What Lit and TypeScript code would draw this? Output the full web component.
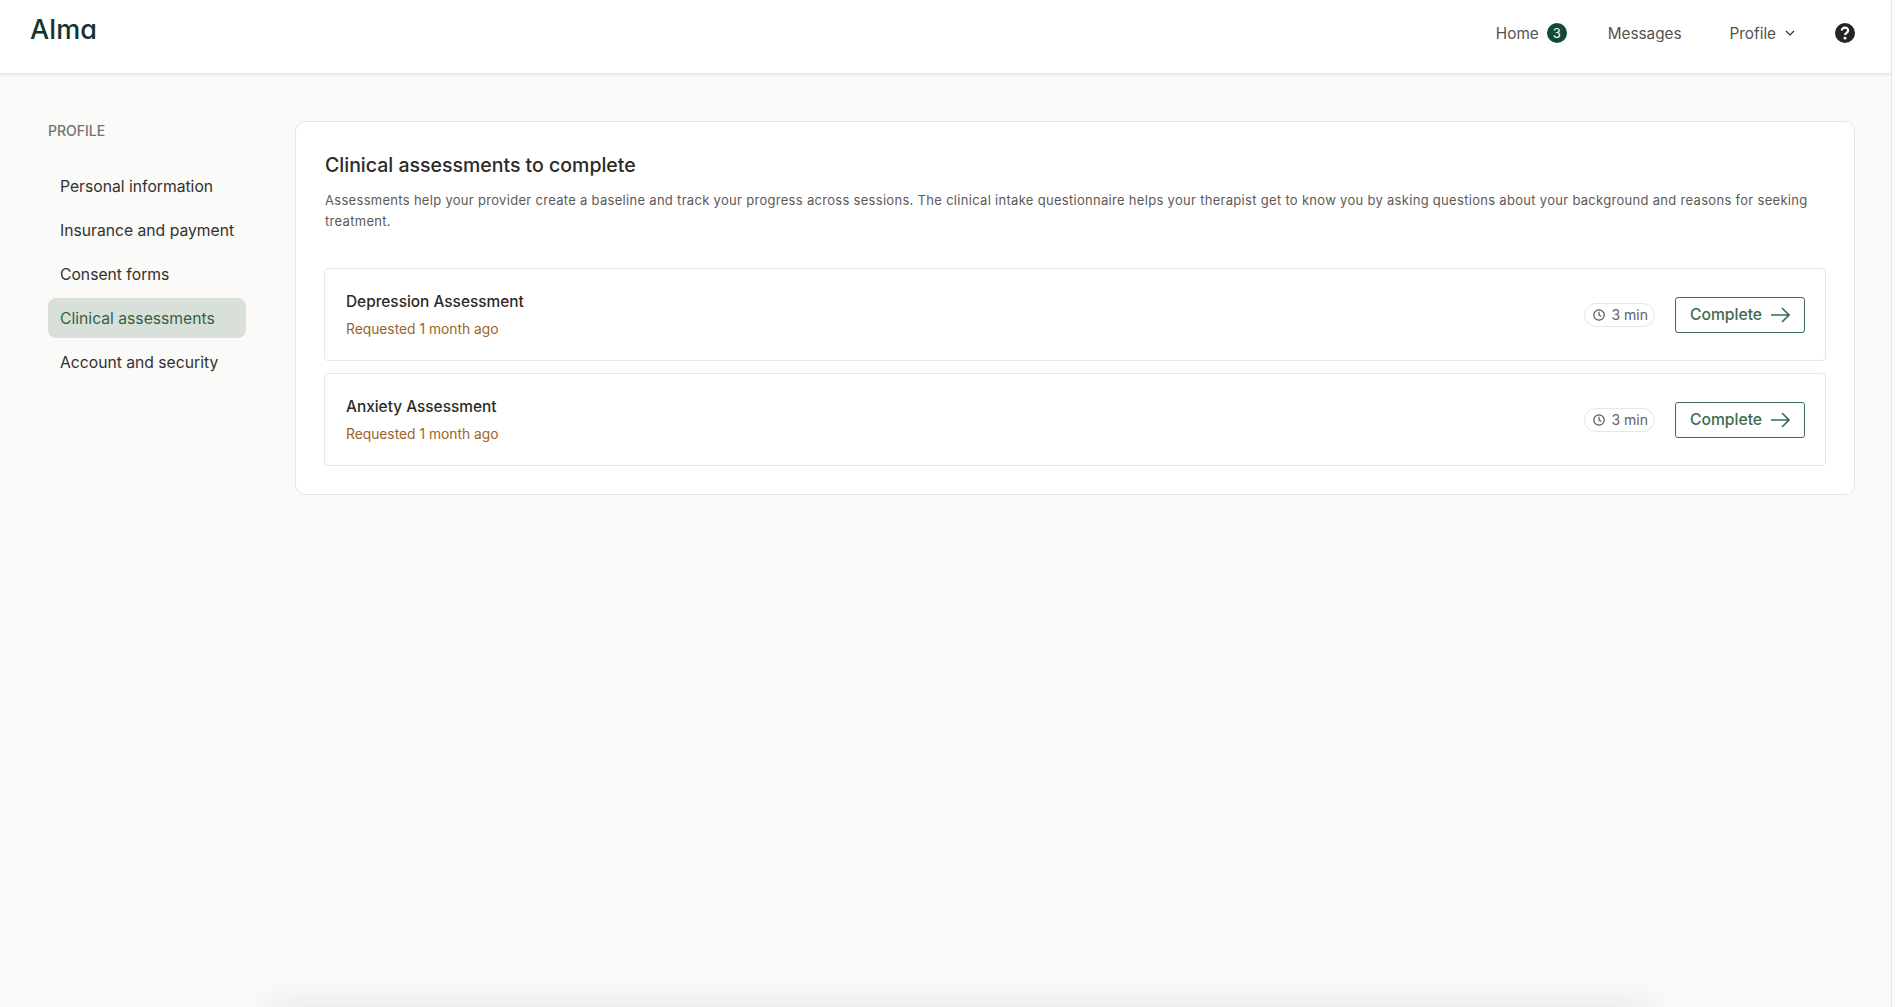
import { LitElement, html, css } from "lit";
import { customElement } from "lit/decorators.js";

const items = ["Personal information", "Insurance and payment", "Consent forms", "Clinical assessments", "Account and security"];
const rows = ["Depression Assessment", "Anxiety Assessment"];

@customElement("app-root")
export class AppRoot extends LitElement {
  static styles = css`
    :host { display: flex; height: 100vh; overflow: hidden; position: relative; font-family: Inter, "Liberation Sans", sans-serif; background: #fafaf8; color: #2b2a29; }
    * { box-sizing: border-box; }
    .page { flex: 1; min-width: 0; display: flex; flex-direction: column; }
    .track { width: 4px; border-left: 1px solid #e6e6e3; background: #fafaf8; }
    header { height: 73px; flex: none; background: #fff; box-shadow: 0 1px 4px rgba(0,0,0,.14); display: flex; align-items: center; justify-content: space-between; padding: 0 36px 7px 30px; }
    .logo { font-size: 27px; font-weight: 500; color: #14352b; letter-spacing: .1px; margin-top: -8px; font-feature-settings: "cv11" 1; }
    nav { display: flex; align-items: center; font-size: 15.3px; color: #555350; }
    .home { display: flex; align-items: center; gap: 8px; }
    .badge { width: 20px; height: 20px; border-radius: 50%; background: #124a38; color: #fff; font-size: 13px; display: flex; align-items: center; justify-content: center; }
    .msg { margin-left: 41px; }
    .prof { margin-left: 48px; display: flex; align-items: center; gap: 9px; }
    .help { margin-left: 40px; width: 20px; height: 20px; display: block; }
    .body { display: flex; padding: 48px 36px 0 48px; gap: 49px; }
    aside { width: 198px; flex: none; }
    .label { font-size: 14px; line-height: 20px; font-weight: 500; color: #77726d; margin-bottom: 25px; }
    .items { display: flex; flex-direction: column; gap: 4px; }
    .item { height: 40px; padding: 0 12px; display: flex; align-items: center; font-size: 15.7px; border-radius: 8px; color: #33312f; white-space: nowrap; }
    .item.active { background: #d9e0da; color: #336146; }
    .card { flex: 1; min-width: 0; background: #fff; border: 1px solid #e8e6df; border-radius: 10px; padding: 28px 28px 28px 29px; }
    h1 { margin: 0; font-size: 19.5px; line-height: 30px; font-weight: 500; color: #2b2a29; }
    p { margin: 10px 0 0; font-size: 13px; letter-spacing: .3px; line-height: 21px; color: #5d5a57; }
    .rows { margin: 36px 0 0 -1px; display: flex; flex-direction: column; gap: 12px; }
    .row { height: 93px; border: 1px solid #e8e6df; border-radius: 4px; padding: 0 20px 0 21px; display: flex; align-items: center; justify-content: space-between; }
    .t { font-size: 15.4px; line-height: 24px; font-weight: 500; color: #2b2a29; }
    .s { font-size: 13.8px; line-height: 21px; color: #9a6429; margin-top: 5px; }
    .right { display: flex; align-items: center; gap: 20px; }
    .pill { height: 24px; padding: 0 6px 0 7px; border: 1px solid #e8e6df; border-radius: 12px; display: flex; align-items: center; gap: 5px; font-size: 14px; color: #66625e; }
    .pill svg { width: 14px; height: 14px; }
    .btn { width: 130px; height: 36px; border: 1.5px solid #3d6b4f; border-radius: 3px; display: flex; align-items: center; justify-content: center; gap: 9px; font-size: 15.7px; font-weight: 500; color: #3d6b4f; }
    .shadow { position: absolute; top: 1007px; left: 270px; width: 1380px; height: 40px; box-shadow: 0 0 40px rgba(0,0,0,.1); }
  `;

  render() {
    return html`
      <div class="page">
        <header>
          <div class="logo">Alma</div>
          <nav>
            <div class="home">Home <span class="badge">3</span></div>
            <div class="msg">Messages</div>
            <div class="prof">Profile
              <svg width="10" height="6" viewBox="0 0 10 6" fill="none" stroke="#2b2a29" stroke-width="1.1"><path d="M1 1l4 4 4-4"/></svg>
            </div>
            <svg class="help" viewBox="0 0 20 20">
              <circle cx="10" cy="10" r="10" fill="#272524"/>
              <path d="M6.8 7.6a3.2 3 0 0 1 6.4 0c0 2.2-3.2 2.2-3.2 4.3" fill="none" stroke="#fff" stroke-width="2.2"/>
              <circle cx="10" cy="15.2" r="1.4" fill="#fff"/>
            </svg>
          </nav>
        </header>
        <div class="body">
          <aside>
            <div class="label">PROFILE</div>
            <div class="items">
              ${items.map((i) => html`<div class="item ${i === "Clinical assessments" ? "active" : ""}">${i}</div>`)}
            </div>
          </aside>
          <section class="card">
            <h1>Clinical assessments to complete</h1>
            <p>Assessments help your provider create a baseline and track your progress across sessions. The clinical intake questionnaire helps your therapist get to know you by asking questions about your background and reasons for seeking treatment.</p>
            <div class="rows">
              ${rows.map((r) => html`
                <div class="row">
                  <div><div class="t">${r}</div><div class="s">Requested 1 month ago</div></div>
                  <div class="right">
                    <div class="pill">
                      <svg viewBox="0 0 14 14" fill="none" stroke="#55524f" stroke-width="1.2"><circle cx="7" cy="7" r="5.2"/><path d="M7 3.8V7l2.2 1.5"/></svg>
                      3 min
                    </div>
                    <div class="btn">Complete
                      <svg width="19" height="16" viewBox="0 0 19 16" fill="none" stroke="#3d6b4f" stroke-width="1.6"><path d="M0 8h18M11 1l7 7-7 7"/></svg>
                    </div>
                  </div>
                </div>`)}
            </div>
          </section>
        </div>
      </div>
      <div class="track"></div>
      <div class="shadow"></div>
    `;
  }
}
